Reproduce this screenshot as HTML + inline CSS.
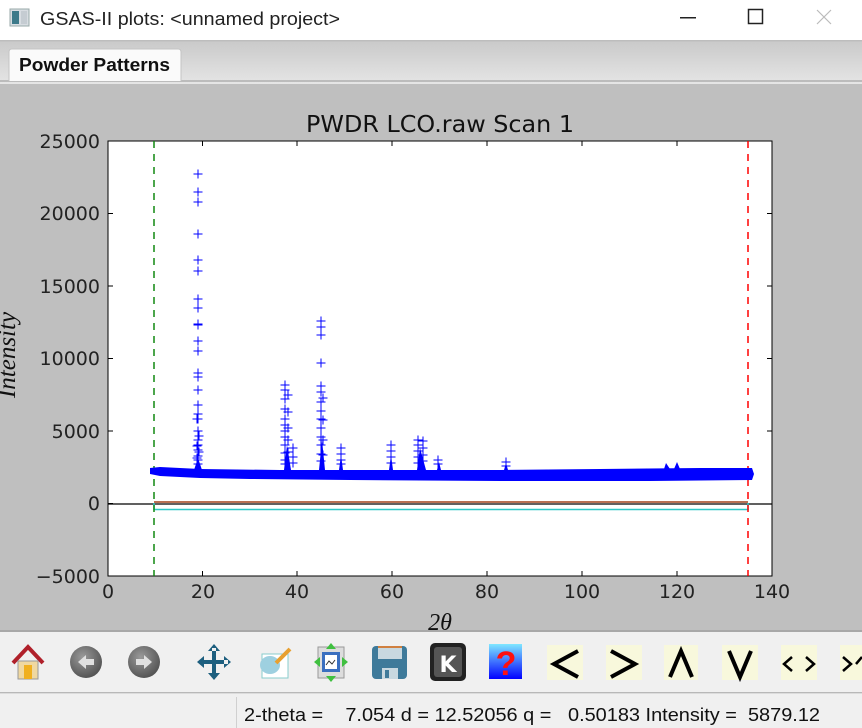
<!DOCTYPE html>
<html><head><meta charset="utf-8"><style>
html,body{margin:0;padding:0;width:862px;height:728px;overflow:hidden;background:#fff}
svg{display:block}
text{font-family:"DejaVu Sans","Liberation Sans",sans-serif}
</style></head><body>
<svg width="862" height="728" viewBox="0 0 862 728" xmlns="http://www.w3.org/2000/svg">
<defs>
<marker id="p" markerWidth="12" markerHeight="12" refX="6" refY="6" markerUnits="userSpaceOnUse"><path d="M1.5 6H10.5M6 1.5V10.5" stroke="#0000ff" stroke-width="1"/></marker>
<linearGradient id="tb" x1="0" y1="0" x2="0" y2="1"><stop offset="0" stop-color="#c9c9c9"/><stop offset="1" stop-color="#e6e6e6"/></linearGradient>
<linearGradient id="q" x1="0" y1="0" x2="0" y2="1"><stop offset="0" stop-color="#7fe7ff"/><stop offset="1" stop-color="#0000ff"/></linearGradient>
<radialGradient id="ball" cx="0.4" cy="0.35" r="0.7"><stop offset="0" stop-color="#9a9a9a"/><stop offset="1" stop-color="#505050"/></radialGradient>
</defs>
<rect x="0" y="0" width="862" height="40" fill="#fff"/>
<rect x="10" y="9" width="19" height="17" fill="#d8dde2" stroke="#9aa" stroke-width="1"/>
<rect x="12" y="11" width="7" height="13" fill="#3d7a8a"/>
<rect x="21" y="11" width="6" height="13" fill="#c5ccd2"/>
<text x="40" y="25" font-size="18" fill="#222" textLength="300" lengthAdjust="spacingAndGlyphs" style="font-family:'Liberation Sans',sans-serif">GSAS-II plots: &lt;unnamed project&gt;</text>
<rect x="680" y="17" width="16" height="1.5" fill="#222"/>
<rect x="748.5" y="9.5" width="14" height="14" fill="none" stroke="#222" stroke-width="1.5"/>
<path d="M817 10L831 24M831 10L817 24" stroke="#bbb" stroke-width="1.2"/>
<rect x="0" y="40" width="862" height="45" fill="url(#tb)"/>
<rect x="0" y="40" width="862" height="1.5" fill="#bdbdbd"/>
<rect x="0" y="80" width="862" height="2" fill="#bcbcbc"/>
<path d="M9 81V52Q9 49 12 49H178Q181 49 181 52V81" fill="#fafafa" stroke="#c4c4c4"/>
<text x="19" y="71" font-size="18" font-weight="bold" fill="#111" textLength="151" lengthAdjust="spacingAndGlyphs" style="font-family:'Liberation Sans',sans-serif">Powder Patterns</text>
<rect x="0" y="84" width="862" height="547" fill="#bfbfbf"/>
<rect x="108" y="141" width="664" height="435" fill="#fff" stroke="#000" stroke-width="1"/>
<text x="440" y="132" font-size="23" text-anchor="middle" fill="#111" textLength="268" lengthAdjust="spacingAndGlyphs">PWDR LCO.raw Scan 1</text>
<g font-size="19" fill="#222" text-anchor="end">
<text x="100" y="148">25000</text><text x="100" y="220">20000</text><text x="100" y="293">15000</text>
<text x="100" y="365">10000</text><text x="100" y="438">5000</text><text x="100" y="510">0</text><text x="100" y="583">−5000</text>
</g>
<g stroke="#000" stroke-width="1">
<path d="M108 213.5h5M108 286h5M108 358.5h5M108 431h5M108 503.5h5M772 213.5h-5M772 286h-5M772 358.5h-5M772 431h-5"/>
<path d="M202.5 576v-5M297 576v-5M392 576v-5M487 576v-5M582 576v-5M677 576v-5M202.5 141v5M297 141v5M392 141v5M487 141v5M582 141v5M677 141v5"/>
</g>
<g font-size="19" fill="#222" text-anchor="middle">
<text x="108" y="598">0</text><text x="203" y="598">20</text><text x="297" y="598">40</text><text x="392" y="598">60</text>
<text x="487" y="598">80</text><text x="582" y="598">100</text><text x="677" y="598">120</text><text x="772" y="598">140</text>
</g>
<text x="440" y="630" font-size="24" text-anchor="middle" font-style="italic" fill="#111" style="font-family:'Liberation Serif',serif">2θ</text>
<text transform="translate(15,355) rotate(-90)" font-size="25" text-anchor="middle" font-style="italic" fill="#111" style="font-family:'Liberation Serif',serif">Intensity</text>
<line x1="108" y1="504" x2="772" y2="504" stroke="#000" stroke-width="1.2"/>
<line x1="154" y1="502" x2="748" y2="502" stroke="#a0401c" stroke-width="1.5"/>
<path d="M154 503V509.5H748V503" fill="none" stroke="#2ec7c7" stroke-width="1.5"/>
<line x1="154" y1="141" x2="154" y2="576" stroke="#118811" stroke-width="1.5" stroke-dasharray="7,6"/>
<line x1="748" y1="141" x2="748" y2="576" stroke="#ff0000" stroke-width="1.5" stroke-dasharray="7,6"/>
<path d="M150 468L160 467L200 469L280 470L400 470L500 470L600 469L700 468L752 468L754 474L752 480L650 481L500 481L350 480L250 479L200 478L160 476L150 474Z" fill="#0000ff"/>
<path d="M194 470L198 458L202 470Z M284 470L287 445L291 470Z M319 470L322 440L325 470Z M339 470L341 455L343 470Z M389 470L391 455L393 470Z M417 470L420 448L426 470Z M437 470L439 462L441 470Z M504 470L506 463L508 470Z M664 469L666 463L670 469Z M674 469L677 462L680 469Z" fill="#0000ff"/>
<g fill="none" stroke="none" marker-start="url(#p)" marker-mid="url(#p)" marker-end="url(#p)">
<polyline points="198,174 198,192 198,202 198,234 198,260 198,271 198,299 198,308 198,324 198,325 198,341 198,351 198,373 198,377 198,390 198,405 198,414 198,419 198,431 198,440 198,445 198,450 198,456 198,460 198,464"/>
<polyline points="197,419 199,436 197,446 199,452 197,458"/>
<polyline points="285,385 285,390 285,399 285,409 285,419 285,425 285,431 285,437 285,445 285,453 285,460 285,464"/>
<polyline points="288,395 288,412 288,428 288,440 288,452"/>
<polyline points="293,448 293,457 293,463"/>
<polyline points="321,321 321,327 321,335 321,363 321,386 321,392 321,402 321,411 321,419 321,428 321,437 321,445 321,454 321,461"/>
<polyline points="323,398 323,420 323,440 323,455"/>
<polyline points="341,448 341,454 341,460 341,464"/>
<polyline points="391,445 391,451 391,457 391,463"/>
<polyline points="418,440 418,445 418,451 418,457 418,463"/>
<polyline points="423,441 423,448 423,455 423,461"/>
<polyline points="438,460 438,464"/>
<polyline points="506,462 506,466"/>
</g>
<rect x="0" y="631" width="862" height="62" fill="#f0f0f0"/>
<rect x="0" y="630" width="862" height="2" fill="#a8a8a8"/>
<rect x="0" y="692" width="862" height="1.5" fill="#b8b8b8"/>
<rect x="0" y="694" width="862" height="34" fill="#f0f0f0"/>
<rect x="236" y="697" width="1" height="31" fill="#d0d0d0"/>
<path d="M13 663L28 647L43 663" fill="none" stroke="#b0202a" stroke-width="4"/>
<rect x="18" y="661" width="20" height="18" fill="#f0d8a0" stroke="#999"/>
<rect x="24" y="665" width="8" height="14" fill="#f0b020"/>
<circle cx="86" cy="662" r="16" fill="url(#ball)"/>
<path d="M78 662L86 655V659H94V665H86V669Z" fill="#e0e0e0"/>
<circle cx="144" cy="662" r="16" fill="url(#ball)"/>
<path d="M152 662L144 655V659H136V665H144V669Z" fill="#e0e0e0"/>
<g fill="#1d5f7f"><path d="M212 648h4v28h-4z M200 660h28v4h-28z M214 644l-6 7h12z M214 680l-6-7h12z M197 662l7-6v12z M231 662l-7-6v12z"/></g>
<rect x="262" y="654" width="26" height="24" fill="#fff" stroke="#8cc"/>
<ellipse cx="270" cy="665" rx="10" ry="9" fill="#9ed0e0"/>
<path d="M276 663L290 649" stroke="#e8a030" stroke-width="4"/>
<rect x="318" y="647" width="26" height="31" fill="#ddd" stroke="#999"/>
<rect x="322" y="652" width="18" height="20" fill="#3a6fc0"/>
<rect x="325" y="655" width="12" height="14" fill="#fff"/>
<path d="M326 665l3-4 3 3 3-4" stroke="#333" fill="none"/>
<path d="M331 643l-5 6h10z M331 682l-5-6h10z M314 662l6-5v10z M348 662l-6-5v10z" fill="#40c040"/>
<rect x="372" y="646" width="35" height="33" rx="4" fill="#3e7a9a"/>
<rect x="378" y="646" width="24" height="13" fill="#c8d8e0"/>
<rect x="378" y="646" width="24" height="2" fill="#d08040"/>
<rect x="382" y="668" width="16" height="11" fill="#c8d8e0"/><rect x="385" y="670" width="4" height="8" fill="#3e7a9a"/>
<rect x="430" y="643" width="36" height="38" rx="5" fill="#222"/>
<rect x="434" y="647" width="28" height="30" rx="3" fill="#555"/>
<text x="448" y="672" font-size="22" font-weight="bold" text-anchor="middle" fill="#fff">K</text>
<rect x="489" y="644" width="33" height="35" fill="url(#q)"/>
<text x="506" y="675" font-size="34" font-weight="bold" text-anchor="middle" fill="#ff1010" style="font-family:'Liberation Sans',sans-serif">?</text>
<g fill="#f8f8dc"><rect x="547" y="645" width="36" height="35"/><rect x="606" y="645" width="36" height="35"/><rect x="664" y="645" width="34" height="35"/><rect x="722" y="645" width="36" height="35"/><rect x="781" y="645" width="36" height="35"/><rect x="840" y="645" width="22" height="35"/></g>
<g fill="none" stroke="#000" stroke-width="4">
<path d="M578 651L554 664L578 677"/><path d="M611 651L635 664L611 677"/>
<path d="M670 677L681 651L692 677"/><path d="M729 651L740 677L751 651"/>
<path d="M792 657L784 664L792 671M806 657L814 664L806 671" stroke-width="2.5"/>
<path d="M843 657L851 664L843 671M862 657L856 664" stroke-width="2.5"/>
</g>
<text x="244" y="721" font-size="18" fill="#111" textLength="576" lengthAdjust="spacingAndGlyphs" style="font-family:'Liberation Sans',sans-serif" xml:space="preserve">2-theta =    7.054 d = 12.52056 q =   0.50183 Intensity =  5879.12</text>
</svg>
</body></html>
